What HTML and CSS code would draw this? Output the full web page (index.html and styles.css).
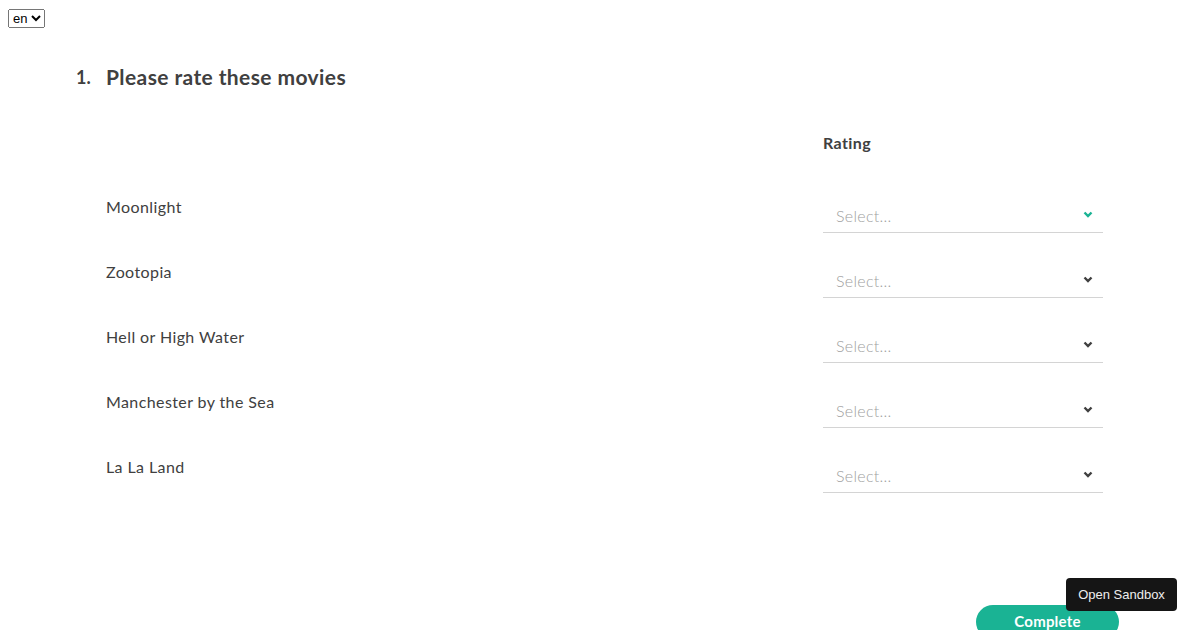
FILE: index.html
```html
<!DOCTYPE html>
<html lang="en">
<head>
<meta charset="utf-8">
<title>Survey</title>
<link rel="stylesheet" href="styles.css">
</head>
<body>
<div class="lang-bar">
  <select class="lang"><option>en</option><option>de</option></select>
</div>
<div class="survey">
  <div class="question">
    <h2 class="q-title"><span class="q-num">1.</span><span class="q-text">Please rate these movies</span></h2>
    <div class="matrix">
      <div class="m-head-empty"></div>
      <div class="m-head">Rating</div>

      <div class="m-label">Moonlight</div>
      <div class="m-cell"><div class="dd"><span class="dd-ph">Select...</span><svg class="chev chev-active" viewBox="0 0 10 7" width="10" height="7"><path d="M1.5 1.5 L5 5 L8.5 1.5" fill="none" stroke="currentColor" stroke-width="2.4"/></svg></div></div>

      <div class="m-label">Zootopia</div>
      <div class="m-cell"><div class="dd"><span class="dd-ph">Select...</span><svg class="chev" viewBox="0 0 10 7" width="10" height="7"><path d="M1.5 1.5 L5 5 L8.5 1.5" fill="none" stroke="currentColor" stroke-width="2.4"/></svg></div></div>

      <div class="m-label">Hell or High Water</div>
      <div class="m-cell"><div class="dd"><span class="dd-ph">Select...</span><svg class="chev" viewBox="0 0 10 7" width="10" height="7"><path d="M1.5 1.5 L5 5 L8.5 1.5" fill="none" stroke="currentColor" stroke-width="2.4"/></svg></div></div>

      <div class="m-label">Manchester by the Sea</div>
      <div class="m-cell"><div class="dd"><span class="dd-ph">Select...</span><svg class="chev" viewBox="0 0 10 7" width="10" height="7"><path d="M1.5 1.5 L5 5 L8.5 1.5" fill="none" stroke="currentColor" stroke-width="2.4"/></svg></div></div>

      <div class="m-label">La La Land</div>
      <div class="m-cell"><div class="dd"><span class="dd-ph">Select...</span><svg class="chev" viewBox="0 0 10 7" width="10" height="7"><path d="M1.5 1.5 L5 5 L8.5 1.5" fill="none" stroke="currentColor" stroke-width="2.4"/></svg></div></div>
    </div>
  </div>
  <div class="footer">
    <button class="complete">Complete</button>
  </div>
</div>
<div class="sandbox-tip">Open Sandbox</div>
</body>
</html>
```

FILE: styles.css
```css
body {
  margin: 8px;
  font-family: "Lato", "Liberation Sans", sans-serif;
  color: #404040;
  background: #fff;
}

.lang-bar {
  height: 20px;
  line-height: 0;
}

.lang {
  font-family: "Liberation Sans", Arial, sans-serif;
  font-size: 13px;
  margin: 1px 0 0;
  vertical-align: top;
}

.survey {
  padding: 0 73px 0 68px;
}

.question {
  margin-top: 34px;
}

.q-title {
  display: flex;
  margin: 0;
  font-size: 21px;
  line-height: 30px;
  font-weight: 700;
  color: #404040;
  letter-spacing: 0.4px;
}

.q-num {
  width: 30px;
  font-size: 18px;
  letter-spacing: 0;
}

.matrix {
  display: grid;
  grid-template-columns: 717px 280px;
  margin-left: 30px;
  margin-top: 39px;
  letter-spacing: 0.4px;
}

.m-head {
  font-size: 16px;
  font-weight: 700;
  line-height: 24px;
  height: 64px;
}

.m-label {
  font-size: 16px;
  line-height: 24px;
  height: 65px;
}

.m-cell {
  padding-top: 3px;
  height: 62px;
}

.dd {
  display: flex;
  align-items: center;
  justify-content: space-between;
  height: 34px;
  border-bottom: 1px solid #d4d4d4;
  padding: 0 11px 0 13px;
}

.dd-ph {
  font-size: 16px;
  font-weight: 300;
  color: #a0a0a0;
  letter-spacing: 0.3px;
}

.chev {
  color: #404040;
  display: block;
  margin-top: -1px;
  margin-right: -1px;
}

.chev-active {
  color: #1ab394;
}

.footer {
  display: flex;
  justify-content: flex-end;
  margin-top: 85px;
}

.complete {
  background: #1ab394;
  color: #fff;
  border: none;
  border-radius: 17px;
  width: 143px;
  height: 34px;
  font-family: "Lato", "Liberation Sans", sans-serif;
  font-size: 15px;
  font-weight: 700;
  letter-spacing: 0.2px;
  padding: 0 0 3px;
}

.sandbox-tip {
  position: fixed;
  right: 23px;
  bottom: 19px;
  width: 111px;
  height: 33px;
  box-sizing: border-box;
  background: #151515;
  color: #eee;
  border-radius: 4px;
  font-family: "Liberation Sans", Arial, sans-serif;
  font-size: 13px;
  line-height: 33px;
  text-align: center;
}
```
